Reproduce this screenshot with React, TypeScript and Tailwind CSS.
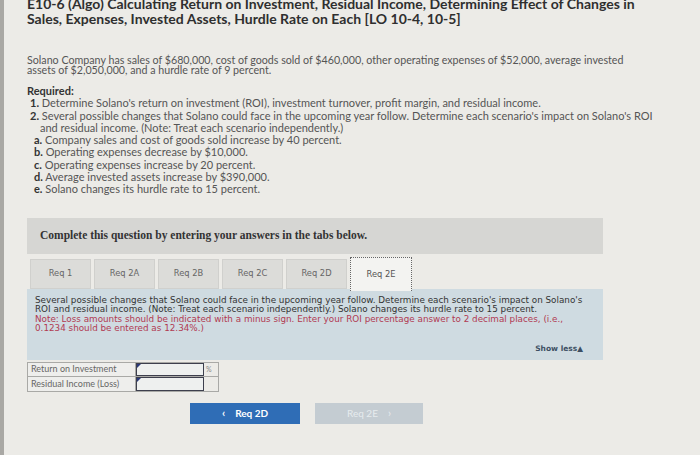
import React from 'react'

const sans = { fontFamily: 'Lato, "Open Sans", sans-serif' }
const verdana = { fontFamily: '"DejaVu Sans", Verdana, sans-serif' }
const serif = { fontFamily: '"Liberation Serif", "DejaVu Serif", serif' }

const TABS = ['Req 1', 'Req 2A', 'Req 2B', 'Req 2C', 'Req 2D', 'Req 2E']

function Cell({ flag }: { flag?: boolean }) {
  return (
    <div className="relative w-[68px] h-full border-[1.5px] border-[#3d3f4d] bg-[#eef0ef]">
      {flag && <span className="absolute left-0 top-0 w-0 h-0 border-t-[4px] border-r-[4px] border-t-[#2b3a7a] border-r-transparent" />}
    </div>
  )
}

export default function App() {
  return (
    <div className="w-[700px] h-[455px] overflow-hidden bg-[#ecebe7] flex">
      <div className="w-[4px] bg-[#a9a8a4] shrink-0" />
      <div className="pl-[23px] flex-1 text-[#444]">
        <h1 style={sans} className="-mt-[4px] w-[640px] text-[14px] leading-[15px] font-bold text-[#2f2f2f]">
          E10-6 (Algo) Calculating Return on Investment, Residual Income, Determining Effect of Changes in Sales, Expenses, Invested Assets, Hurdle Rate on Each [LO 10-4, 10-5]
        </h1>

        <p style={sans} className="mt-[29px] w-[624px] text-[10.7px] leading-[10px] text-[#555]">
          Solano Company has sales of $680,000, cost of goods sold of $460,000, other operating expenses of $52,000, average invested assets of $2,050,000, and a hurdle rate of 9 percent.
        </p>

        <div style={sans} className="mt-[10px] text-[11px] leading-[12.3px] text-[#555]">
          <p className="font-bold text-[#333]">Required:</p>
          <p className="pl-[3px]"><b className="text-[#333]">1.</b> Determine Solano's return on investment (ROI), investment turnover, profit margin, and residual income.</p>
          <p className="pl-[3px] w-[640px]"><b className="text-[#333]">2.</b> Several possible changes that Solano could face in the upcoming year follow. Determine each scenario's impact on Solano's ROI</p>
          <p className="pl-[13px]">and residual income. (Note: Treat each scenario independently.)</p>
          <p className="pl-[7px]"><b className="text-[#333]">a.</b> Company sales and cost of goods sold increase by 40 percent.</p>
          <p className="pl-[7px]"><b className="text-[#333]">b.</b> Operating expenses decrease by $10,000.</p>
          <p className="pl-[7px]"><b className="text-[#333]">c.</b> Operating expenses increase by 20 percent.</p>
          <p className="pl-[7px]"><b className="text-[#333]">d.</b> Average invested assets increase by $390,000.</p>
          <p className="pl-[7px]"><b className="text-[#333]">e.</b> Solano changes its hurdle rate to 15 percent.</p>
        </div>

        <div className="mt-[22px] w-[576px] h-[36px] bg-[#d6d6d3] pl-[13px] flex items-center">
          <p style={serif} className="text-[11.5px] font-bold text-[#333]">
            Complete this question by entering your answers in the tabs below.
          </p>
        </div>

        <div className="mt-[3px] flex gap-[3px] pl-[3px] items-end h-[32px]">
          {TABS.map((t, i) =>
            i === 5 ? (
              <div key={t} style={verdana} className="w-[62px] h-[34px] -mb-[2px] border border-dotted border-[#666] border-b-0 bg-[#f3f3f1] flex items-center justify-center text-[8.3px] text-[#555]">
                {t}
              </div>
            ) : (
              <div key={t} style={verdana} className="w-[61px] h-[30px] bg-[#dcdcd9] border border-[#d0d0cd] flex items-center justify-center text-[8.3px] text-[#666]">
                {t}
              </div>
            )
          )}
        </div>

        <div style={verdana} className="w-[576px] h-[71px] bg-[#cfdbe1] px-[8px] pt-[7px] text-[8.8px] leading-[9.5px]">
          <p className="text-[#333] w-[552px]">
            Several possible changes that Solano could face in the upcoming year follow. Determine each scenario's impact on Solano's ROI and residual income. (Note: Treat each scenario independently.) Solano changes its hurdle rate to 15 percent.
          </p>
          <p className="text-[#b13a52] w-[535px]">
            Note: Loss amounts should be indicated with a minus sign. Enter your ROI percentage answer to 2 decimal places, (i.e., 0.1234 should be entered as 12.34%.)
          </p>
          <p className="mt-[10px] text-right pr-[12px] font-bold text-[#3d4f63] text-[7.5px]">Show less▲</p>
        </div>

        <div style={sans} className="mt-[2px] w-[192px] border border-[#a9a9a6] text-[9px] text-[#666]">
          <div className="flex h-[14px] border-b border-[#a9a9a6]">
            <div className="w-[108px] pl-[3px] bg-[#eeeeec] flex items-center border-r border-[#a9a9a6]">Return on Investment</div>
            <Cell flag />
            <div className="flex-1 flex items-center pl-[2px] text-[7px] text-[#888]">%</div>
          </div>
          <div className="flex h-[14px]">
            <div className="w-[108px] pl-[3px] bg-[#eeeeec] flex items-center border-r border-[#a9a9a6]">Residual Income (Loss)</div>
            <Cell flag />
            <div className="flex-1" />
          </div>
        </div>

        <div className="mt-[11px] flex gap-[15px] pl-[163px]">
          <button style={sans} className="w-[110px] h-[21px] bg-[#2f6db6] text-white text-[10px] font-bold flex items-center justify-center gap-[10px]">
            <span className="text-[11px]">‹</span> Req 2D
          </button>
          <button style={sans} className="w-[108px] h-[21px] bg-[#c4ccd2] text-[#e6ebee] text-[10px] flex items-center justify-center gap-[10px]">
            Req 2E <span className="text-[11px]">›</span>
          </button>
        </div>
      </div>
    </div>
  )
}
